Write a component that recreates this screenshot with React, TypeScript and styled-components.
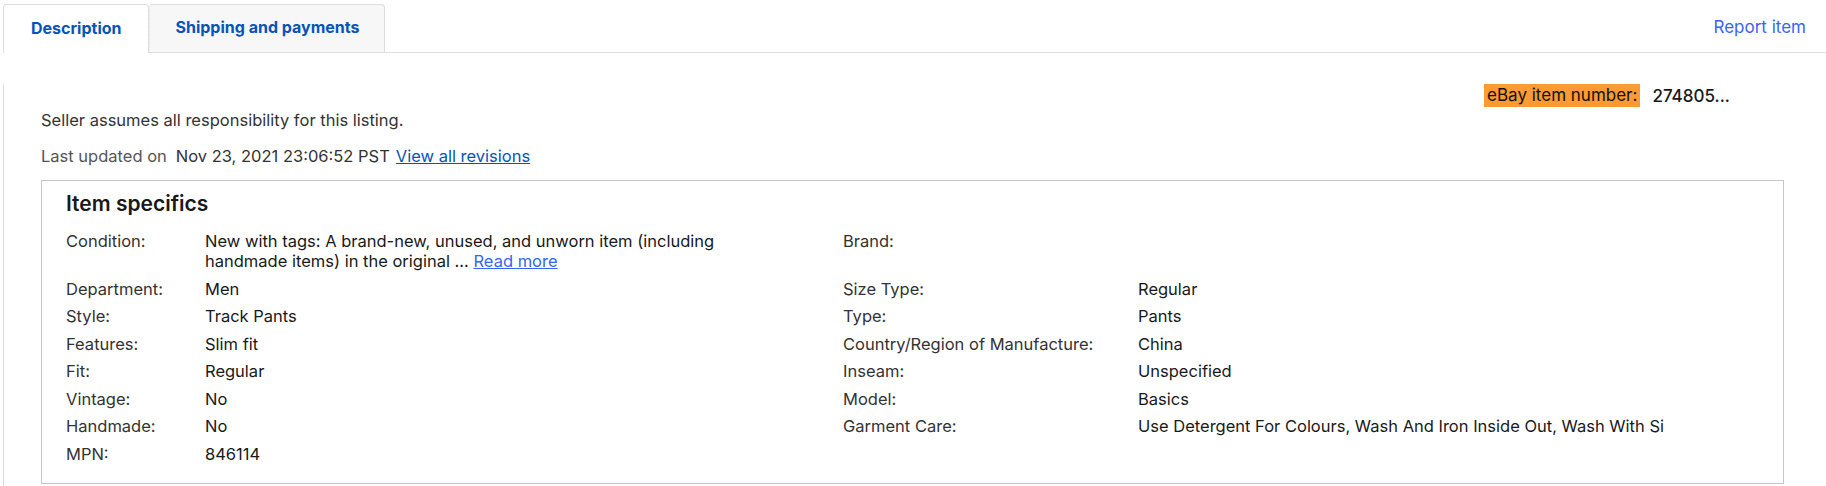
import { Fragment } from "react";
import type { ReactNode } from "react";
import styled, { createGlobalStyle } from "styled-components";

const GlobalStyle = createGlobalStyle`
  body {
    margin: 0;
    background: #fff;
    font-family: Inter, "Open Sans", Arial, sans-serif;
    color: #191919;
  }
`;

const Page = styled.div`
  padding: 4px 0 0 3px;
`;

const TabBar = styled.div`
  display: flex;
  align-items: flex-end;
  height: 48px;
  border-bottom: 1px solid #ddd;
`;

const Tab = styled.div<{ $active?: boolean }>`
  box-sizing: border-box;
  height: ${(p) => (p.$active ? "49px" : "48px")};
  margin-bottom: ${(p) => (p.$active ? "-1px" : "0")};
  padding: 0 ${(p) => (p.$active ? "27px" : "25px")} 3px;
  display: flex;
  align-items: center;
  border: 1px solid #ddd;
  border-bottom: none;
  border-left: ${(p) => (p.$active ? "1px solid #ddd" : "1px dotted #e4e4e4")};
  border-radius: 4px 4px 0 0;
  background: ${(p) => (p.$active ? "#fff" : "#f7f7f7")};
  color: #0654ba;
  font-size: 16px;
  font-weight: 700;
  cursor: pointer;
`;

const ReportLink = styled.a`
  margin-left: auto;
  align-self: center;
  margin-right: 20px;
  padding-bottom: 3px;
  color: #3665f3;
  font-size: 17px;
  text-decoration: none;
`;

const Panel = styled.div`
  border-left: 1px solid #ddd;
  padding: 0 42px 5px 37px;
`;

const ItemNumberRow = styled.div`
  display: flex;
  justify-content: flex-end;
  align-items: center;
  gap: 12px;
  margin-top: 31px;
  padding-right: 54px;
  height: 23px;
  font-size: 17px;
`;

const Highlight = styled.span`
  background: #fe9a33;
  color: #111;
  line-height: 23px;
  padding: 0 3px;
`;

const ItemNumber = styled.span`
  color: #191919;
  font-weight: 500;
`;

const Note = styled.div<{ $top: number }>`
  margin-top: ${(p) => p.$top}px;
  font-size: 16.5px;
  line-height: 20px;
  color: #333;
`;

const Muted = styled.span`
  color: #555;
  margin-right: 9px;
`;

const BlueLink = styled.a<{ $light?: boolean }>`
  color: ${(p) => (p.$light ? "#3665f3" : "#0654ba")};
  text-decoration: underline;
  margin-left: ${(p) => (p.$light ? "0" : "6px")};
`;

const SpecsBox = styled.section`
  margin-top: 14px;
  border: 1px solid #c7c7c7;
  padding: 11px 24px 19px 24px;
`;

const SpecsTitle = styled.h2`
  margin: 0 0 15px;
  font-size: 21px;
  line-height: 24px;
  font-weight: 600;
  color: #191919;
`;

const SpecsGrid = styled.div`
  display: grid;
  grid-template-columns: 139px 638px 295px 1fr;
  row-gap: 7.5px;
  font-size: 16.5px;
  line-height: 20px;
  color: #333;
`;

const Label = styled.div`
  color: #333;
`;

const Value = styled.div<{ $wide?: boolean }>`
  color: #191919;
  padding-right: ${(p) => (p.$wide ? "0" : "80px")};
`;

type Spec = { label: string; value: ReactNode };

const rows: [Spec, Spec | null][] = [
  [
    {
      label: "Condition:",
      value: (
        <>
          New with tags: A brand-new, unused, and unworn item (including handmade items) in the original ...{" "}
          <BlueLink $light href="#">Read more</BlueLink>
        </>
      ),
    },
    { label: "Brand:", value: "" },
  ],
  [{ label: "Department:", value: "Men" }, { label: "Size Type:", value: "Regular" }],
  [{ label: "Style:", value: "Track Pants" }, { label: "Type:", value: "Pants" }],
  [
    { label: "Features:", value: "Slim fit" },
    { label: "Country/Region of Manufacture:", value: "China" },
  ],
  [{ label: "Fit:", value: "Regular" }, { label: "Inseam:", value: "Unspecified" }],
  [{ label: "Vintage:", value: "No" }, { label: "Model:", value: "Basics" }],
  [
    { label: "Handmade:", value: "No" },
    {
      label: "Garment Care:",
      value: "Use Detergent For Colours, Wash And Iron Inside Out, Wash With Si",
    },
  ],
  [{ label: "MPN:", value: "846114" }, null],
];

export default function App() {
  return (
    <>
      <GlobalStyle />
      <Page>
        <TabBar>
          <Tab $active>Description</Tab>
          <Tab>Shipping and payments</Tab>
          <ReportLink href="#">Report item</ReportLink>
        </TabBar>
        <Panel>
          <ItemNumberRow>
            <Highlight>eBay item number:</Highlight>
            <ItemNumber>274805...</ItemNumber>
          </ItemNumberRow>
          <Note $top={3}>Seller assumes all responsibility for this listing.</Note>
          <Note $top={16}>
            <Muted>Last updated on</Muted>
            Nov 23, 2021 23:06:52 PST
            <BlueLink href="#">View all revisions</BlueLink>
          </Note>
          <SpecsBox>
            <SpecsTitle>Item specifics</SpecsTitle>
            <SpecsGrid>
              {rows.map(([left, right]) => (
                <Fragment key={left.label}>
                  <Label>{left.label}</Label>
                  <Value>{left.value}</Value>
                  <Label>{right ? right.label : ""}</Label>
                  <Value $wide>{right ? right.value : ""}</Value>
                </Fragment>
              ))}
            </SpecsGrid>
          </SpecsBox>
        </Panel>
      </Page>
    </>
  );
}
